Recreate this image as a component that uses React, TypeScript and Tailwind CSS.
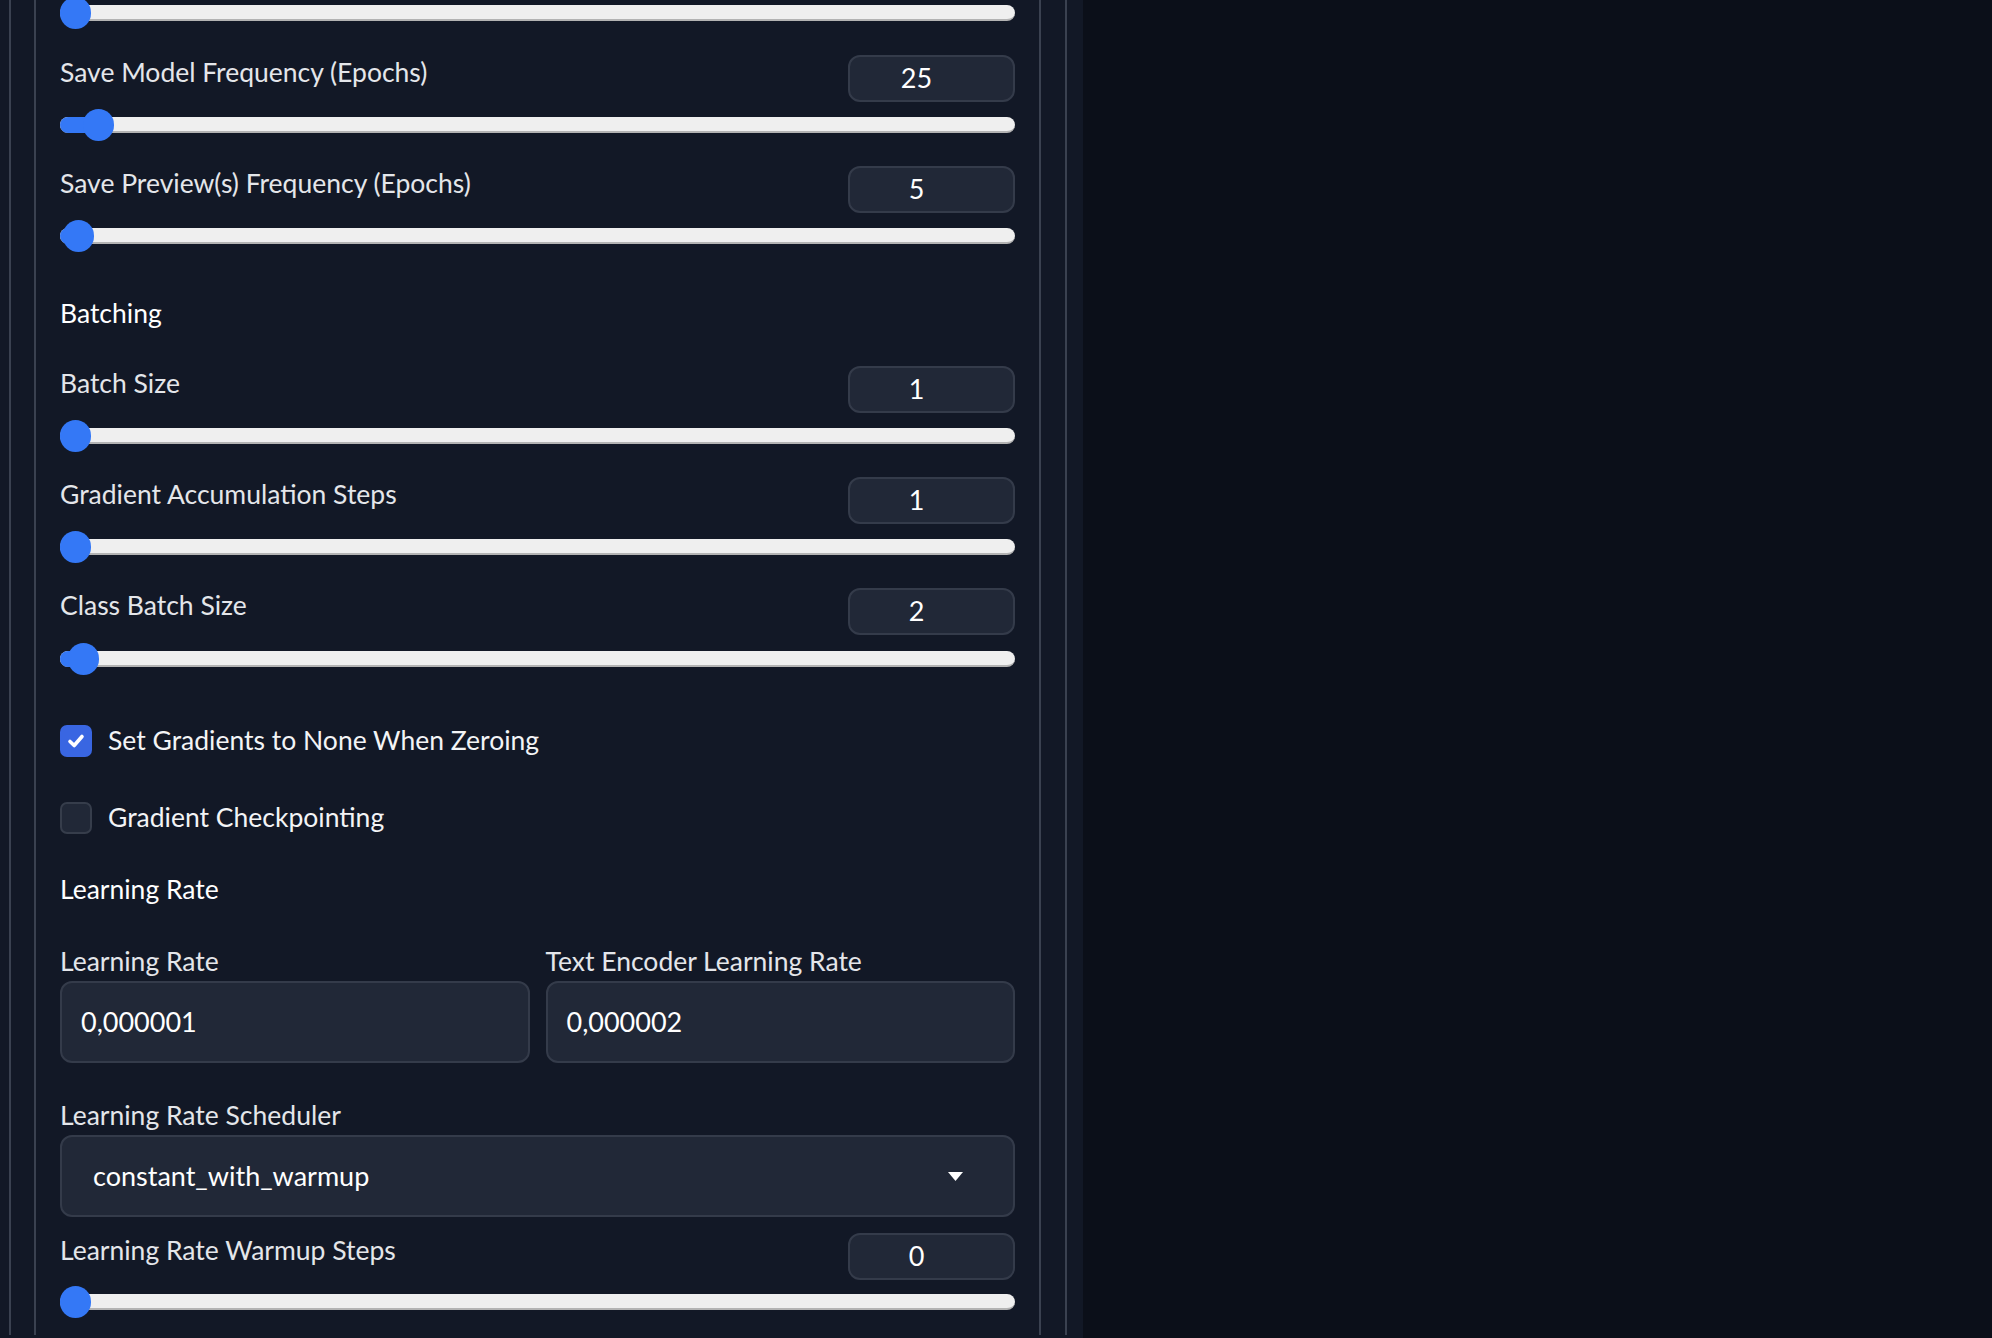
import React from "react";

const FONT = { fontFamily: "Lato, 'Open Sans', sans-serif" };

function Slider({ pos }: { pos: number }) {
  return (
    <div className="relative h-[32px] w-full">
      <div className="absolute left-0 right-0 top-[8px] h-[16px] rounded-full bg-[#efefef] border-b-[2px] border-[#b3b3b3]" />
      <div
        className="absolute left-0 top-[8px] h-[16px] rounded-l-full bg-[#3478f6]"
        style={{ width: pos + 15 }}
      />
      <div
        className="absolute top-0 h-[32px] w-[31px] rounded-full bg-[#3478f6]"
        style={{ left: pos }}
      />
    </div>
  );
}

function NumRow({ label, value }: { label: string; value: string }) {
  return (
    <div className="flex h-[47px] items-start justify-between">
      <div className="text-[26.5px] leading-[34px] text-[#e4e6ea]">{label}</div>
      <div className="flex h-[47px] w-[167px] items-center justify-center rounded-[12px] border-[2px] border-[#343b4a] bg-[#212837] pr-[30px] text-[27px] text-white">
        {value}
      </div>
    </div>
  );
}

export default function App() {
  return (
    <div className="flex h-[1338px] w-full overflow-hidden bg-[#0b0f19]" style={FONT}>
      <div className="h-full w-[1083px] shrink-0 bg-[#121826] pl-[9px] pr-[16px]">
        <div className="h-full border-x-[2px] border-[#3a4150] pl-[23px] pr-[24px]">
          <div className="h-full border-x-[2px] border-[#3a4150] pl-[24px] pr-[24px]">
            <div className="-mt-[3px] flex flex-col">
              <Slider pos={0} />
              <div className="mt-[26px]">
                <NumRow label="Save Model Frequency (Epochs)" value="25" />
              </div>
              <div className="mt-[7px]">
                <Slider pos={23} />
              </div>
              <div className="mt-[25px]">
                <NumRow label="Save Preview(s) Frequency (Epochs)" value="5" />
              </div>
              <div className="mt-[7px]">
                <Slider pos={3} />
              </div>
              <div className="mt-[44px] text-[26.5px] leading-[34px] text-white">Batching</div>
              <div className="mt-[36px]">
                <NumRow label="Batch Size" value="1" />
              </div>
              <div className="mt-[7px]">
                <Slider pos={0} />
              </div>
              <div className="mt-[25px]">
                <NumRow label="Gradient Accumulation Steps" value="1" />
              </div>
              <div className="mt-[7px]">
                <Slider pos={0} />
              </div>
              <div className="mt-[25px]">
                <NumRow label="Class Batch Size" value="2" />
              </div>
              <div className="mt-[8px]">
                <Slider pos={8} />
              </div>

              <div className="mt-[50px] flex h-[32px] items-center">
                <div className="flex h-[32px] w-[32px] items-center justify-center rounded-[7px] bg-[#3966e2]">
                  <svg width="20" height="20" viewBox="0 0 20 20" fill="none">
                    <path d="M4 10.5 L8.2 14.5 L16 5.5" stroke="white" strokeWidth="3.6" strokeLinecap="round" strokeLinejoin="round" />
                  </svg>
                </div>
                <span className="ml-[16px] text-[26.5px] text-[#f3f4f6]">Set Gradients to None When Zeroing</span>
              </div>
              <div className="mt-[45px] flex h-[32px] items-center">
                <div className="h-[32px] w-[32px] rounded-[7px] border-[2px] border-[#363d4b] bg-[#212837]" />
                <span className="ml-[16px] text-[26.5px] text-[#f3f4f6]">Gradient Checkpointing</span>
              </div>

              <div className="mt-[38px] text-[26.5px] leading-[34px] text-white">Learning Rate</div>

              <div className="mt-[38px] grid grid-cols-2 gap-x-[16px]">
                <div className="flex flex-col">
                  <div className="text-[26.5px] leading-[34px] text-[#e4e6ea]">Learning Rate</div>
                  <div className="mt-[3px] flex h-[82px] items-center rounded-[12px] border-[2px] border-[#343b4a] bg-[#212837] pl-[19px] text-[27px] text-white">
                    0,000001
                  </div>
                </div>
                <div className="flex flex-col">
                  <div className="text-[26.5px] leading-[34px] text-[#e4e6ea]">Text Encoder Learning Rate</div>
                  <div className="mt-[3px] flex h-[82px] items-center rounded-[12px] border-[2px] border-[#343b4a] bg-[#212837] pl-[19px] text-[27px] text-white">
                    0,000002
                  </div>
                </div>
              </div>

              <div className="mt-[35px] text-[26.5px] leading-[34px] text-[#e4e6ea]">Learning Rate Scheduler</div>
              <div className="mt-[3px] flex h-[82px] items-center justify-between rounded-[12px] border-[2px] border-[#343b4a] bg-[#212837] pl-[31px] pr-[50px] text-[27px] text-white">
                <span>constant_with_warmup</span>
                <svg width="15" height="9" viewBox="0 0 15 9">
                  <path d="M0 0 H15 L7.5 9 Z" fill="white" />
                </svg>
              </div>

              <div className="mt-[16px]">
                <NumRow label="Learning Rate Warmup Steps" value="0" />
              </div>
              <div className="mt-[6px]">
                <Slider pos={0} />
              </div>
            </div>
          </div>
        </div>
      </div>
    </div>
  );
}
